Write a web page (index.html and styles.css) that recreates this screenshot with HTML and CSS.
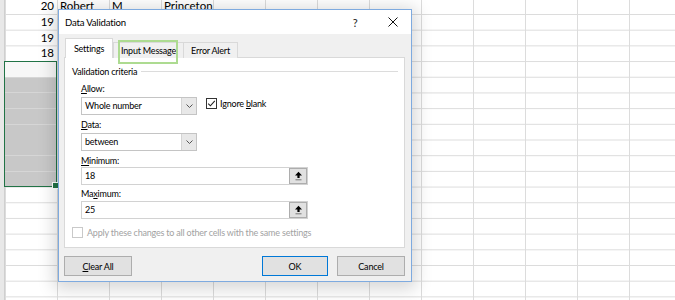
FILE: index.html
```html
<!DOCTYPE html>
<html lang="en">
<head>
    <meta charset="UTF-8">
    <meta name="viewport" content="width=device-width, initial-scale=1.0">
    <title>Data Validation</title>
    <link rel="stylesheet" href="styles.css">
</head>
<body>
    <div class="sheet">
        <div class="rowHeads"></div>
        <div class="cells">
            <div class="cell num">20</div>
            <div class="cell">Robert</div>
            <div class="cell">M</div>
            <div class="cell">Princeton</div>
            <div class="cell num rowStart">19</div>
            <div class="cell num rowStart">19</div>
            <div class="cell num rowStart">18</div>
            <div class="selection"></div>
        </div>

        <!-- dialogo -->
        <div class="dialog">
            <div class="titleBar">
                <span class="titleText">Data Validation</span>
                <span class="titleBtn help">?</span>
                <span class="titleBtn close">
                    <svg width="10" height="10" viewBox="0 0 10 10"><path d="M0.5 0.5 L9.5 9.5 M9.5 0.5 L0.5 9.5" stroke="#111" stroke-width="1" fill="none"/></svg>
                </span>
            </div>
            <div class="dialogBody">
                <div class="tabs">
                    <div class="tab active">Settings</div>
                    <div class="tab marked">Input Message<span class="highlight"></span></div>
                    <div class="tab">Error Alert</div>
                </div>
                <div class="panel">
                    <div class="groupTitle"><span>Validation criteria</span><span class="groupLine"></span></div>
                    <div class="fields">
                        <div class="label label-allow"><u>A</u>llow:</div>
                        <div class="comboRow">
                            <div class="combo">
                                <span class="comboText">Whole number</span>
                                <span class="comboArrow"><svg width="7" height="4" viewBox="0 0 7 4"><path d="M0.5 0.5 L3.5 3.5 L6.5 0.5" stroke="#555" fill="none"/></svg></span>
                            </div>
                            <label class="check">
                                <span class="box checked"><svg width="9" height="9" viewBox="0 0 9 9"><path d="M1.2 4.6 L3.4 6.8 L7.8 1.8" stroke="#222" stroke-width="1.1" fill="none"/></svg></span>
                                <span>Ignore <u>b</u>lank</span>
                            </label>
                        </div>
                        <div class="label label-data"><u>D</u>ata:</div>
                        <div class="combo">
                            <span class="comboText">between</span>
                            <span class="comboArrow"><svg width="7" height="4" viewBox="0 0 7 4"><path d="M0.5 0.5 L3.5 3.5 L6.5 0.5" stroke="#555" fill="none"/></svg></span>
                        </div>
                        <div class="label label-min"><u>M</u>inimum:</div>
                        <div class="refEdit">
                            <span class="refText">18</span>
                            <span class="refBtn"><svg width="9" height="10" viewBox="0 0 9 10"><path d="M4.5 0.8 L8 4.6 L5.6 4.6 L5.6 7 L3.4 7 L3.4 4.6 L1 4.6 Z" fill="#000"/><path d="M1.5 8.8 H7.5" stroke="#777" stroke-width="1"/></svg></span>
                        </div>
                        <div class="label label-max">Ma<u>x</u>imum:</div>
                        <div class="refEdit">
                            <span class="refText">25</span>
                            <span class="refBtn"><svg width="9" height="10" viewBox="0 0 9 10"><path d="M4.5 0.8 L8 4.6 L5.6 4.6 L5.6 7 L3.4 7 L3.4 4.6 L1 4.6 Z" fill="#000"/><path d="M1.5 8.8 H7.5" stroke="#777" stroke-width="1"/></svg></span>
                        </div>
                    </div>
                    <label class="check disabled">
                        <span class="box"></span>
                        <span>Apply these changes to all other cells with the same settings</span>
                    </label>
                </div>
                <div class="buttons">
                    <button class="btn"><u>C</u>lear All</button>
                    <span class="spacer"></span>
                    <button class="btn primary">OK</button>
                    <button class="btn">Cancel</button>
                </div>
            </div>
        </div>
    </div>
</body>
</html>
```

FILE: styles.css
```css
/* variables */
:root{
    --gridLine: #dcdcdc;
    --rowH: 15.7px;
    --colW: 52px;
    --dlgFont: 9px;
}
*{
    box-sizing: border-box;
}
body{
    margin: 0;
    font-family: 'Lato', 'Liberation Sans', sans-serif;
}
/* hoja de calculo */
.sheet{
    position: relative;
    display: flex;
    width: 675px;
    height: 300px;
    overflow: hidden;
    background-color: #fff;
    background-image:
        linear-gradient(to right, var(--gridLine) 1px, transparent 1px),
        linear-gradient(to bottom, var(--gridLine) 1px, transparent 1px);
    background-size: var(--colW) var(--rowH);
    background-position: 5px 14px;
}
.rowHeads{
    flex: 0 0 5px;
    background-color: #e8e8e8;
    border-right: 1px solid #cfcfcf;
}
.cells{
    display: grid;
    grid-template-columns: repeat(4, var(--colW));
    grid-auto-rows: var(--rowH);
    margin-top: -1.7px;
    font-size: 11.5px;
    color: #000;
}
.cell{
    padding: 0 3px;
    line-height: 15px;
    white-space: nowrap;
}
.num{
    text-align: right;
}
.rowStart{
    grid-column: 1;
}
/* seleccion */
.selection{
    position: relative;
    grid-column: 1;
    grid-row: 5 / span 8;
    margin-left: -1px;
    border: 1px solid #217346;
    background:
        linear-gradient(#f7f7f7 0 14.7px, transparent 14.7px),
        repeating-linear-gradient(#c8c8c8 0 14.7px, #d6d6d6 14.7px 15.7px);
}
.selection::after{
    content: '';
    position: absolute;
    right: -3px;
    bottom: -3px;
    width: 5px;
    height: 5px;
    background-color: #217346;
    border: 1px solid #fff;
}
/* dialogo */
.dialog{
    position: absolute;
    left: 58px;
    top: 9px;
    width: 354px;
    height: 273px;
    display: flex;
    flex-direction: column;
    border: 1px solid #7eaadf;
    background-color: #f0f0f0;
    box-shadow: 0 3px 16px 4px rgba(0, 0, 0, 0.16);
    font-size: var(--dlgFont);
    letter-spacing: -0.2px;
    color: #000;
}
.titleBar{
    display: flex;
    align-items: center;
    height: 24px;
    padding-left: 6px;
    background-color: #fff;
}
.titleText{
    flex: 1;
    font-size: 9.6px;
}
.titleBtn{
    width: 36px;
    text-align: center;
    font-size: 11px;
    color: #222;
}
.help{
    margin-right: 2px;
}
.close{
    display: flex;
    justify-content: center;
}
.dialogBody{
    flex: 1;
    display: flex;
    flex-direction: column;
    padding: 5px 6px 0 5px;
}
/* pestañas */
.tabs{
    display: flex;
    align-items: flex-end;
    height: 19px;
    padding-left: 1px;
    margin-bottom: -1px;
    position: relative;
    z-index: 1;
}
.tab{
    position: relative;
    height: 16px;
    line-height: 15px;
    padding: 0 8px;
    border: 1px solid #d9d9d9;
    border-bottom: none;
    background-color: #f0f0f0;
    white-space: nowrap;
}
.tab + .tab{
    margin-left: -1px;
}
.tab.active{
    height: 20px;
    line-height: 20px;
    width: 48px;
    text-align: center;
    padding: 0;
    background-color: #fff;
    margin-right: 1px;
}
.tab.marked{
    width: 71px;
    text-align: center;
    padding: 0;
}
.tab:last-child{
    width: 55px;
    text-align: center;
    padding: 0;
}
.highlight{
    position: absolute;
    left: 4px;
    top: -3px;
    width: 60px;
    height: 24px;
    border: 2px solid #addb91;
}
.panel{
    height: 191px;
    padding: 6px 6px 0 7px;
    background-color: #fff;
    border: 1px solid #d9d9d9;
}
.groupTitle{
    display: flex;
    align-items: center;
    height: 14px;
}
.groupLine{
    flex: 1;
    height: 1px;
    margin-left: 4px;
    background-color: #dcdcdc;
}
.fields{
    padding-left: 9px;
}
.label{
    height: 12px;
    line-height: 12px;
}
.label-allow{ margin-top: 5px; }
.label-data{ margin-top: 4px; margin-bottom: 2px; }
.label-min{ margin-top: 4px; }
.label-max{ margin-top: 3px; margin-bottom: 1px; }
/* combos */
.comboRow{
    display: flex;
    align-items: center;
    margin-top: 2px;
}
.combo{
    display: flex;
    width: 116px;
    height: 18px;
    border: 1px solid #c4c4c4;
    background-color: #fff;
}
.comboText{
    flex: 1;
    padding-left: 3px;
    line-height: 16px;
}
.comboArrow{
    display: flex;
    align-items: center;
    justify-content: center;
    width: 15px;
    background-color: #e8e8e8;
    border-left: 1px solid #d4d4d4;
}
/* checkbox */
.check{
    display: flex;
    align-items: center;
    gap: 3px;
}
.comboRow .check{
    margin-left: 9px;
    margin-top: -5px;
}
.box{
    display: flex;
    align-items: center;
    justify-content: center;
    width: 11px;
    height: 11px;
    border: 1px solid #c9c9c9;
    background-color: #fff;
}
.box.checked{
    border-color: #333;
}
.check.disabled{
    margin-top: 8px;
    gap: 4px;
    color: #a2a2a2;
}
/* refedit */
.refEdit{
    display: flex;
    width: 227px;
    height: 18px;
    border: 1px solid #d2d2d2;
    background-color: #fff;
}
.refText{
    flex: 1;
    padding-left: 3px;
    line-height: 16px;
}
.refBtn{
    display: flex;
    align-items: center;
    justify-content: center;
    width: 18px;
    background-color: #e1e1e1;
    border: 1px solid #adadad;
}
/* botones */
.buttons{
    display: flex;
    gap: 9px;
    margin-top: 8px;
}
.spacer{
    flex: 1;
}
.btn{
    width: 68px;
    height: 20px;
    padding: 0;
    font-family: inherit;
    font-size: var(--dlgFont);
    letter-spacing: -0.2px;
    color: #000;
    background-color: #e1e1e1;
    border: 1px solid #adadad;
}
.btn.primary{
    width: 66px;
    border-color: #0078d7;
}
```
